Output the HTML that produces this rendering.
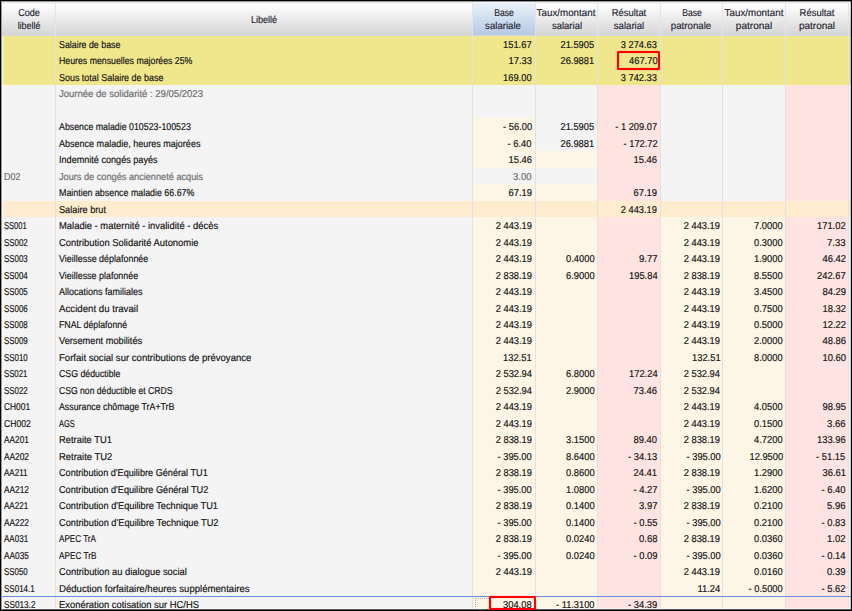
<!DOCTYPE html>
<html><head><meta charset="utf-8"><style>
*{margin:0;padding:0;box-sizing:border-box}
html,body{width:852px;height:611px;overflow:hidden;background:#000}
body{position:relative;text-rendering:geometricPrecision;font-family:"Liberation Sans",sans-serif;font-size:10px;color:#151515}
.a{position:absolute}
.t{position:absolute;white-space:pre;line-height:12px;transform-origin:0 0;-webkit-text-stroke:0.18px currentColor}
.n{position:absolute;white-space:pre;line-height:12px;transform-origin:100% 0;-webkit-text-stroke:0.18px currentColor}
.gt{color:#6e6e6e}
.ht{position:absolute;white-space:pre;line-height:12px;color:#1f2530;transform-origin:50% 0;-webkit-text-stroke:0.15px currentColor}
</style></head><body>

<div class="a" style="left:1px;top:1px;width:850px;height:608px;background:#f4f4f4"></div>
<div class="a" style="left:1px;top:1px;width:850px;height:35px;background:linear-gradient(#999 0px,#f0f0f0 1px,#ececec 2px,#fdfdfd 3.5px,#fbfbfb 6px,#d5d5d5 34px)"></div>
<div class="a" style="left:473px;top:2px;width:62px;height:33px;background:linear-gradient(#ecf3fb,#b5c9e3)"></div>
<div class="a" style="left:1px;top:35px;width:850px;height:1px;background:#d7d7e1"></div>
<div class="a" style="left:55px;top:3px;width:1px;height:32px;background:#e4e4e4"></div>
<div class="a" style="left:472px;top:3px;width:1px;height:32px;background:#e4e4e4"></div>
<div class="a" style="left:535px;top:3px;width:1px;height:32px;background:#e4e4e4"></div>
<div class="a" style="left:597px;top:3px;width:1px;height:32px;background:#e4e4e4"></div>
<div class="a" style="left:660px;top:3px;width:1px;height:32px;background:#e4e4e4"></div>
<div class="a" style="left:722px;top:3px;width:1px;height:32px;background:#e4e4e4"></div>
<div class="a" style="left:785px;top:3px;width:1px;height:32px;background:#e4e4e4"></div>
<div class="a" style="left:848px;top:3px;width:1px;height:32px;background:#e4e4e4"></div>
<div class="a" style="left:1px;top:36.00px;width:54px;height:16.47px;background:#f0e68c"></div>
<div class="a" style="left:56px;top:36.00px;width:416px;height:16.47px;background:#f0e68c"></div>
<div class="a" style="left:473px;top:36.00px;width:62px;height:16.47px;background:#f0e68c"></div>
<div class="a" style="left:536px;top:36.00px;width:61px;height:16.47px;background:#f0e68c"></div>
<div class="a" style="left:598px;top:36.00px;width:62px;height:16.47px;background:#f0e68c"></div>
<div class="a" style="left:661px;top:36.00px;width:61px;height:16.47px;background:#f0e68c"></div>
<div class="a" style="left:723px;top:36.00px;width:62px;height:16.47px;background:#f0e68c"></div>
<div class="a" style="left:786px;top:36.00px;width:62px;height:16.47px;background:#f0e68c"></div>
<div class="a" style="left:849px;top:36.00px;width:2px;height:16.47px;background:#f0e68c"></div>
<div class="a" style="left:55px;top:36.00px;width:1px;height:16.47px;background:#e2e2e2"></div>
<div class="a" style="left:472px;top:36.00px;width:1px;height:16.47px;background:#e2e2e2"></div>
<div class="a" style="left:535px;top:36.00px;width:1px;height:16.47px;background:#e2e2e2"></div>
<div class="a" style="left:597px;top:36.00px;width:1px;height:16.47px;background:#e2e2e2"></div>
<div class="a" style="left:660px;top:36.00px;width:1px;height:16.47px;background:#e2e2e2"></div>
<div class="a" style="left:722px;top:36.00px;width:1px;height:16.47px;background:#e2e2e2"></div>
<div class="a" style="left:785px;top:36.00px;width:1px;height:16.47px;background:#e2e2e2"></div>
<div class="a" style="left:848px;top:36.00px;width:1px;height:16.47px;background:#e2e2e2"></div>
<div class="a" style="left:1px;top:52.47px;width:54px;height:16.47px;background:#f0e68c"></div>
<div class="a" style="left:56px;top:52.47px;width:416px;height:16.47px;background:#f0e68c"></div>
<div class="a" style="left:473px;top:52.47px;width:62px;height:16.47px;background:#f0e68c"></div>
<div class="a" style="left:536px;top:52.47px;width:61px;height:16.47px;background:#f0e68c"></div>
<div class="a" style="left:598px;top:52.47px;width:62px;height:16.47px;background:#f0e68c"></div>
<div class="a" style="left:661px;top:52.47px;width:61px;height:16.47px;background:#f0e68c"></div>
<div class="a" style="left:723px;top:52.47px;width:62px;height:16.47px;background:#f0e68c"></div>
<div class="a" style="left:786px;top:52.47px;width:62px;height:16.47px;background:#f0e68c"></div>
<div class="a" style="left:849px;top:52.47px;width:2px;height:16.47px;background:#f0e68c"></div>
<div class="a" style="left:55px;top:52.47px;width:1px;height:16.47px;background:#e2e2e2"></div>
<div class="a" style="left:472px;top:52.47px;width:1px;height:16.47px;background:#e2e2e2"></div>
<div class="a" style="left:535px;top:52.47px;width:1px;height:16.47px;background:#e2e2e2"></div>
<div class="a" style="left:597px;top:52.47px;width:1px;height:16.47px;background:#e2e2e2"></div>
<div class="a" style="left:660px;top:52.47px;width:1px;height:16.47px;background:#e2e2e2"></div>
<div class="a" style="left:722px;top:52.47px;width:1px;height:16.47px;background:#e2e2e2"></div>
<div class="a" style="left:785px;top:52.47px;width:1px;height:16.47px;background:#e2e2e2"></div>
<div class="a" style="left:848px;top:52.47px;width:1px;height:16.47px;background:#e2e2e2"></div>
<div class="a" style="left:1px;top:68.94px;width:54px;height:16.47px;background:#f0e68c"></div>
<div class="a" style="left:56px;top:68.94px;width:416px;height:16.47px;background:#f0e68c"></div>
<div class="a" style="left:473px;top:68.94px;width:62px;height:16.47px;background:#f0e68c"></div>
<div class="a" style="left:536px;top:68.94px;width:61px;height:16.47px;background:#f0e68c"></div>
<div class="a" style="left:598px;top:68.94px;width:62px;height:16.47px;background:#f0e68c"></div>
<div class="a" style="left:661px;top:68.94px;width:61px;height:16.47px;background:#f0e68c"></div>
<div class="a" style="left:723px;top:68.94px;width:62px;height:16.47px;background:#f0e68c"></div>
<div class="a" style="left:786px;top:68.94px;width:62px;height:16.47px;background:#f0e68c"></div>
<div class="a" style="left:849px;top:68.94px;width:2px;height:16.47px;background:#f0e68c"></div>
<div class="a" style="left:55px;top:68.94px;width:1px;height:16.47px;background:#e2e2e2"></div>
<div class="a" style="left:472px;top:68.94px;width:1px;height:16.47px;background:#e2e2e2"></div>
<div class="a" style="left:535px;top:68.94px;width:1px;height:16.47px;background:#e2e2e2"></div>
<div class="a" style="left:597px;top:68.94px;width:1px;height:16.47px;background:#e2e2e2"></div>
<div class="a" style="left:660px;top:68.94px;width:1px;height:16.47px;background:#e2e2e2"></div>
<div class="a" style="left:722px;top:68.94px;width:1px;height:16.47px;background:#e2e2e2"></div>
<div class="a" style="left:785px;top:68.94px;width:1px;height:16.47px;background:#e2e2e2"></div>
<div class="a" style="left:848px;top:68.94px;width:1px;height:16.47px;background:#e2e2e2"></div>
<div class="a" style="left:1px;top:85.41px;width:54px;height:16.47px;background:#f4f4f4"></div>
<div class="a" style="left:56px;top:85.41px;width:416px;height:16.47px;background:#f4f4f4"></div>
<div class="a" style="left:473px;top:85.41px;width:62px;height:16.47px;background:#f4f4f4"></div>
<div class="a" style="left:536px;top:85.41px;width:61px;height:16.47px;background:#f4f4f4"></div>
<div class="a" style="left:598px;top:85.41px;width:62px;height:16.47px;background:#ffe4e1"></div>
<div class="a" style="left:661px;top:85.41px;width:61px;height:16.47px;background:#f4f4f4"></div>
<div class="a" style="left:723px;top:85.41px;width:62px;height:16.47px;background:#f4f4f4"></div>
<div class="a" style="left:786px;top:85.41px;width:62px;height:16.47px;background:#ffe4e1"></div>
<div class="a" style="left:849px;top:85.41px;width:2px;height:16.47px;background:#f4f4f4"></div>
<div class="a" style="left:55px;top:85.41px;width:1px;height:16.47px;background:#e2e2e2"></div>
<div class="a" style="left:472px;top:85.41px;width:1px;height:16.47px;background:#e2e2e2"></div>
<div class="a" style="left:535px;top:85.41px;width:1px;height:16.47px;background:#e2e2e2"></div>
<div class="a" style="left:597px;top:85.41px;width:1px;height:16.47px;background:#e2e2e2"></div>
<div class="a" style="left:660px;top:85.41px;width:1px;height:16.47px;background:#e2e2e2"></div>
<div class="a" style="left:722px;top:85.41px;width:1px;height:16.47px;background:#e2e2e2"></div>
<div class="a" style="left:785px;top:85.41px;width:1px;height:16.47px;background:#e2e2e2"></div>
<div class="a" style="left:848px;top:85.41px;width:1px;height:16.47px;background:#e2e2e2"></div>
<div class="a" style="left:1px;top:101.88px;width:54px;height:16.47px;background:#f4f4f4"></div>
<div class="a" style="left:56px;top:101.88px;width:416px;height:16.47px;background:#f4f4f4"></div>
<div class="a" style="left:473px;top:101.88px;width:62px;height:16.47px;background:#f4f4f4"></div>
<div class="a" style="left:536px;top:101.88px;width:61px;height:16.47px;background:#f4f4f4"></div>
<div class="a" style="left:598px;top:101.88px;width:62px;height:16.47px;background:#ffe4e1"></div>
<div class="a" style="left:661px;top:101.88px;width:61px;height:16.47px;background:#f4f4f4"></div>
<div class="a" style="left:723px;top:101.88px;width:62px;height:16.47px;background:#f4f4f4"></div>
<div class="a" style="left:786px;top:101.88px;width:62px;height:16.47px;background:#ffe4e1"></div>
<div class="a" style="left:849px;top:101.88px;width:2px;height:16.47px;background:#f4f4f4"></div>
<div class="a" style="left:55px;top:101.88px;width:1px;height:16.47px;background:#e2e2e2"></div>
<div class="a" style="left:472px;top:101.88px;width:1px;height:16.47px;background:#e2e2e2"></div>
<div class="a" style="left:535px;top:101.88px;width:1px;height:16.47px;background:#e2e2e2"></div>
<div class="a" style="left:597px;top:101.88px;width:1px;height:16.47px;background:#e2e2e2"></div>
<div class="a" style="left:660px;top:101.88px;width:1px;height:16.47px;background:#e2e2e2"></div>
<div class="a" style="left:722px;top:101.88px;width:1px;height:16.47px;background:#e2e2e2"></div>
<div class="a" style="left:785px;top:101.88px;width:1px;height:16.47px;background:#e2e2e2"></div>
<div class="a" style="left:848px;top:101.88px;width:1px;height:16.47px;background:#e2e2e2"></div>
<div class="a" style="left:1px;top:118.35px;width:54px;height:16.47px;background:#f4f4f4"></div>
<div class="a" style="left:56px;top:118.35px;width:416px;height:16.47px;background:#f4f4f4"></div>
<div class="a" style="left:473px;top:118.35px;width:62px;height:16.47px;background:#fdf5e6"></div>
<div class="a" style="left:536px;top:118.35px;width:61px;height:16.47px;background:#f4f4f4"></div>
<div class="a" style="left:598px;top:118.35px;width:62px;height:16.47px;background:#ffe4e1"></div>
<div class="a" style="left:661px;top:118.35px;width:61px;height:16.47px;background:#f4f4f4"></div>
<div class="a" style="left:723px;top:118.35px;width:62px;height:16.47px;background:#f4f4f4"></div>
<div class="a" style="left:786px;top:118.35px;width:62px;height:16.47px;background:#ffe4e1"></div>
<div class="a" style="left:849px;top:118.35px;width:2px;height:16.47px;background:#f4f4f4"></div>
<div class="a" style="left:55px;top:118.35px;width:1px;height:16.47px;background:#e2e2e2"></div>
<div class="a" style="left:472px;top:118.35px;width:1px;height:16.47px;background:#e2e2e2"></div>
<div class="a" style="left:535px;top:118.35px;width:1px;height:16.47px;background:#e2e2e2"></div>
<div class="a" style="left:597px;top:118.35px;width:1px;height:16.47px;background:#e2e2e2"></div>
<div class="a" style="left:660px;top:118.35px;width:1px;height:16.47px;background:#e2e2e2"></div>
<div class="a" style="left:722px;top:118.35px;width:1px;height:16.47px;background:#e2e2e2"></div>
<div class="a" style="left:785px;top:118.35px;width:1px;height:16.47px;background:#e2e2e2"></div>
<div class="a" style="left:848px;top:118.35px;width:1px;height:16.47px;background:#e2e2e2"></div>
<div class="a" style="left:1px;top:134.82px;width:54px;height:16.47px;background:#f4f4f4"></div>
<div class="a" style="left:56px;top:134.82px;width:416px;height:16.47px;background:#f4f4f4"></div>
<div class="a" style="left:473px;top:134.82px;width:62px;height:16.47px;background:#fdf5e6"></div>
<div class="a" style="left:536px;top:134.82px;width:61px;height:16.47px;background:#f4f4f4"></div>
<div class="a" style="left:598px;top:134.82px;width:62px;height:16.47px;background:#ffe4e1"></div>
<div class="a" style="left:661px;top:134.82px;width:61px;height:16.47px;background:#f4f4f4"></div>
<div class="a" style="left:723px;top:134.82px;width:62px;height:16.47px;background:#f4f4f4"></div>
<div class="a" style="left:786px;top:134.82px;width:62px;height:16.47px;background:#ffe4e1"></div>
<div class="a" style="left:849px;top:134.82px;width:2px;height:16.47px;background:#f4f4f4"></div>
<div class="a" style="left:55px;top:134.82px;width:1px;height:16.47px;background:#e2e2e2"></div>
<div class="a" style="left:472px;top:134.82px;width:1px;height:16.47px;background:#e2e2e2"></div>
<div class="a" style="left:535px;top:134.82px;width:1px;height:16.47px;background:#e2e2e2"></div>
<div class="a" style="left:597px;top:134.82px;width:1px;height:16.47px;background:#e2e2e2"></div>
<div class="a" style="left:660px;top:134.82px;width:1px;height:16.47px;background:#e2e2e2"></div>
<div class="a" style="left:722px;top:134.82px;width:1px;height:16.47px;background:#e2e2e2"></div>
<div class="a" style="left:785px;top:134.82px;width:1px;height:16.47px;background:#e2e2e2"></div>
<div class="a" style="left:848px;top:134.82px;width:1px;height:16.47px;background:#e2e2e2"></div>
<div class="a" style="left:1px;top:151.29px;width:54px;height:16.47px;background:#f4f4f4"></div>
<div class="a" style="left:56px;top:151.29px;width:416px;height:16.47px;background:#f4f4f4"></div>
<div class="a" style="left:473px;top:151.29px;width:62px;height:16.47px;background:#fdf5e6"></div>
<div class="a" style="left:536px;top:151.29px;width:61px;height:16.47px;background:#fdf5e6"></div>
<div class="a" style="left:598px;top:151.29px;width:62px;height:16.47px;background:#ffe4e1"></div>
<div class="a" style="left:661px;top:151.29px;width:61px;height:16.47px;background:#f4f4f4"></div>
<div class="a" style="left:723px;top:151.29px;width:62px;height:16.47px;background:#f4f4f4"></div>
<div class="a" style="left:786px;top:151.29px;width:62px;height:16.47px;background:#ffe4e1"></div>
<div class="a" style="left:849px;top:151.29px;width:2px;height:16.47px;background:#f4f4f4"></div>
<div class="a" style="left:55px;top:151.29px;width:1px;height:16.47px;background:#e2e2e2"></div>
<div class="a" style="left:472px;top:151.29px;width:1px;height:16.47px;background:#e2e2e2"></div>
<div class="a" style="left:535px;top:151.29px;width:1px;height:16.47px;background:#e2e2e2"></div>
<div class="a" style="left:597px;top:151.29px;width:1px;height:16.47px;background:#e2e2e2"></div>
<div class="a" style="left:660px;top:151.29px;width:1px;height:16.47px;background:#e2e2e2"></div>
<div class="a" style="left:722px;top:151.29px;width:1px;height:16.47px;background:#e2e2e2"></div>
<div class="a" style="left:785px;top:151.29px;width:1px;height:16.47px;background:#e2e2e2"></div>
<div class="a" style="left:848px;top:151.29px;width:1px;height:16.47px;background:#e2e2e2"></div>
<div class="a" style="left:1px;top:167.76px;width:54px;height:16.47px;background:#f4f4f4"></div>
<div class="a" style="left:56px;top:167.76px;width:416px;height:16.47px;background:#f4f4f4"></div>
<div class="a" style="left:473px;top:167.76px;width:62px;height:16.47px;background:#f4f4f4"></div>
<div class="a" style="left:536px;top:167.76px;width:61px;height:16.47px;background:#f4f4f4"></div>
<div class="a" style="left:598px;top:167.76px;width:62px;height:16.47px;background:#ffe4e1"></div>
<div class="a" style="left:661px;top:167.76px;width:61px;height:16.47px;background:#f4f4f4"></div>
<div class="a" style="left:723px;top:167.76px;width:62px;height:16.47px;background:#f4f4f4"></div>
<div class="a" style="left:786px;top:167.76px;width:62px;height:16.47px;background:#ffe4e1"></div>
<div class="a" style="left:849px;top:167.76px;width:2px;height:16.47px;background:#f4f4f4"></div>
<div class="a" style="left:55px;top:167.76px;width:1px;height:16.47px;background:#e2e2e2"></div>
<div class="a" style="left:472px;top:167.76px;width:1px;height:16.47px;background:#e2e2e2"></div>
<div class="a" style="left:535px;top:167.76px;width:1px;height:16.47px;background:#e2e2e2"></div>
<div class="a" style="left:597px;top:167.76px;width:1px;height:16.47px;background:#e2e2e2"></div>
<div class="a" style="left:660px;top:167.76px;width:1px;height:16.47px;background:#e2e2e2"></div>
<div class="a" style="left:722px;top:167.76px;width:1px;height:16.47px;background:#e2e2e2"></div>
<div class="a" style="left:785px;top:167.76px;width:1px;height:16.47px;background:#e2e2e2"></div>
<div class="a" style="left:848px;top:167.76px;width:1px;height:16.47px;background:#e2e2e2"></div>
<div class="a" style="left:1px;top:184.23px;width:54px;height:16.47px;background:#f4f4f4"></div>
<div class="a" style="left:56px;top:184.23px;width:416px;height:16.47px;background:#f4f4f4"></div>
<div class="a" style="left:473px;top:184.23px;width:62px;height:16.47px;background:#fdf5e6"></div>
<div class="a" style="left:536px;top:184.23px;width:61px;height:16.47px;background:#fdf5e6"></div>
<div class="a" style="left:598px;top:184.23px;width:62px;height:16.47px;background:#ffe4e1"></div>
<div class="a" style="left:661px;top:184.23px;width:61px;height:16.47px;background:#f4f4f4"></div>
<div class="a" style="left:723px;top:184.23px;width:62px;height:16.47px;background:#f4f4f4"></div>
<div class="a" style="left:786px;top:184.23px;width:62px;height:16.47px;background:#ffe4e1"></div>
<div class="a" style="left:849px;top:184.23px;width:2px;height:16.47px;background:#f4f4f4"></div>
<div class="a" style="left:55px;top:184.23px;width:1px;height:16.47px;background:#e2e2e2"></div>
<div class="a" style="left:472px;top:184.23px;width:1px;height:16.47px;background:#e2e2e2"></div>
<div class="a" style="left:535px;top:184.23px;width:1px;height:16.47px;background:#e2e2e2"></div>
<div class="a" style="left:597px;top:184.23px;width:1px;height:16.47px;background:#e2e2e2"></div>
<div class="a" style="left:660px;top:184.23px;width:1px;height:16.47px;background:#e2e2e2"></div>
<div class="a" style="left:722px;top:184.23px;width:1px;height:16.47px;background:#e2e2e2"></div>
<div class="a" style="left:785px;top:184.23px;width:1px;height:16.47px;background:#e2e2e2"></div>
<div class="a" style="left:848px;top:184.23px;width:1px;height:16.47px;background:#e2e2e2"></div>
<div class="a" style="left:1px;top:200.70px;width:54px;height:16.47px;background:#ffebcd"></div>
<div class="a" style="left:56px;top:200.70px;width:416px;height:16.47px;background:#ffebcd"></div>
<div class="a" style="left:473px;top:200.70px;width:62px;height:16.47px;background:#ffebcd"></div>
<div class="a" style="left:536px;top:200.70px;width:61px;height:16.47px;background:#ffebcd"></div>
<div class="a" style="left:598px;top:200.70px;width:62px;height:16.47px;background:#ffebcd"></div>
<div class="a" style="left:661px;top:200.70px;width:61px;height:16.47px;background:#ffebcd"></div>
<div class="a" style="left:723px;top:200.70px;width:62px;height:16.47px;background:#ffebcd"></div>
<div class="a" style="left:786px;top:200.70px;width:62px;height:16.47px;background:#ffebcd"></div>
<div class="a" style="left:849px;top:200.70px;width:2px;height:16.47px;background:#ffebcd"></div>
<div class="a" style="left:55px;top:200.70px;width:1px;height:16.47px;background:#e2e2e2"></div>
<div class="a" style="left:472px;top:200.70px;width:1px;height:16.47px;background:#e2e2e2"></div>
<div class="a" style="left:535px;top:200.70px;width:1px;height:16.47px;background:#e2e2e2"></div>
<div class="a" style="left:597px;top:200.70px;width:1px;height:16.47px;background:#e2e2e2"></div>
<div class="a" style="left:660px;top:200.70px;width:1px;height:16.47px;background:#e2e2e2"></div>
<div class="a" style="left:722px;top:200.70px;width:1px;height:16.47px;background:#e2e2e2"></div>
<div class="a" style="left:785px;top:200.70px;width:1px;height:16.47px;background:#e2e2e2"></div>
<div class="a" style="left:848px;top:200.70px;width:1px;height:16.47px;background:#e2e2e2"></div>
<div class="a" style="left:1px;top:217.17px;width:54px;height:16.47px;background:#f4f4f4"></div>
<div class="a" style="left:56px;top:217.17px;width:416px;height:16.47px;background:#f4f4f4"></div>
<div class="a" style="left:473px;top:217.17px;width:62px;height:16.47px;background:#fdf5e6"></div>
<div class="a" style="left:536px;top:217.17px;width:61px;height:16.47px;background:#fdf5e6"></div>
<div class="a" style="left:598px;top:217.17px;width:62px;height:16.47px;background:#ffe4e1"></div>
<div class="a" style="left:661px;top:217.17px;width:61px;height:16.47px;background:#fdf5e6"></div>
<div class="a" style="left:723px;top:217.17px;width:62px;height:16.47px;background:#fdf5e6"></div>
<div class="a" style="left:786px;top:217.17px;width:62px;height:16.47px;background:#ffe4e1"></div>
<div class="a" style="left:849px;top:217.17px;width:2px;height:16.47px;background:#f4f4f4"></div>
<div class="a" style="left:55px;top:217.17px;width:1px;height:16.47px;background:#e2e2e2"></div>
<div class="a" style="left:472px;top:217.17px;width:1px;height:16.47px;background:#e2e2e2"></div>
<div class="a" style="left:535px;top:217.17px;width:1px;height:16.47px;background:#e2e2e2"></div>
<div class="a" style="left:597px;top:217.17px;width:1px;height:16.47px;background:#e2e2e2"></div>
<div class="a" style="left:660px;top:217.17px;width:1px;height:16.47px;background:#e2e2e2"></div>
<div class="a" style="left:722px;top:217.17px;width:1px;height:16.47px;background:#e2e2e2"></div>
<div class="a" style="left:785px;top:217.17px;width:1px;height:16.47px;background:#e2e2e2"></div>
<div class="a" style="left:848px;top:217.17px;width:1px;height:16.47px;background:#e2e2e2"></div>
<div class="a" style="left:1px;top:233.64px;width:54px;height:16.47px;background:#f4f4f4"></div>
<div class="a" style="left:56px;top:233.64px;width:416px;height:16.47px;background:#f4f4f4"></div>
<div class="a" style="left:473px;top:233.64px;width:62px;height:16.47px;background:#fdf5e6"></div>
<div class="a" style="left:536px;top:233.64px;width:61px;height:16.47px;background:#fdf5e6"></div>
<div class="a" style="left:598px;top:233.64px;width:62px;height:16.47px;background:#ffe4e1"></div>
<div class="a" style="left:661px;top:233.64px;width:61px;height:16.47px;background:#fdf5e6"></div>
<div class="a" style="left:723px;top:233.64px;width:62px;height:16.47px;background:#fdf5e6"></div>
<div class="a" style="left:786px;top:233.64px;width:62px;height:16.47px;background:#ffe4e1"></div>
<div class="a" style="left:849px;top:233.64px;width:2px;height:16.47px;background:#f4f4f4"></div>
<div class="a" style="left:55px;top:233.64px;width:1px;height:16.47px;background:#e2e2e2"></div>
<div class="a" style="left:472px;top:233.64px;width:1px;height:16.47px;background:#e2e2e2"></div>
<div class="a" style="left:535px;top:233.64px;width:1px;height:16.47px;background:#e2e2e2"></div>
<div class="a" style="left:597px;top:233.64px;width:1px;height:16.47px;background:#e2e2e2"></div>
<div class="a" style="left:660px;top:233.64px;width:1px;height:16.47px;background:#e2e2e2"></div>
<div class="a" style="left:722px;top:233.64px;width:1px;height:16.47px;background:#e2e2e2"></div>
<div class="a" style="left:785px;top:233.64px;width:1px;height:16.47px;background:#e2e2e2"></div>
<div class="a" style="left:848px;top:233.64px;width:1px;height:16.47px;background:#e2e2e2"></div>
<div class="a" style="left:1px;top:250.11px;width:54px;height:16.47px;background:#f4f4f4"></div>
<div class="a" style="left:56px;top:250.11px;width:416px;height:16.47px;background:#f4f4f4"></div>
<div class="a" style="left:473px;top:250.11px;width:62px;height:16.47px;background:#fdf5e6"></div>
<div class="a" style="left:536px;top:250.11px;width:61px;height:16.47px;background:#fdf5e6"></div>
<div class="a" style="left:598px;top:250.11px;width:62px;height:16.47px;background:#ffe4e1"></div>
<div class="a" style="left:661px;top:250.11px;width:61px;height:16.47px;background:#fdf5e6"></div>
<div class="a" style="left:723px;top:250.11px;width:62px;height:16.47px;background:#fdf5e6"></div>
<div class="a" style="left:786px;top:250.11px;width:62px;height:16.47px;background:#ffe4e1"></div>
<div class="a" style="left:849px;top:250.11px;width:2px;height:16.47px;background:#f4f4f4"></div>
<div class="a" style="left:55px;top:250.11px;width:1px;height:16.47px;background:#e2e2e2"></div>
<div class="a" style="left:472px;top:250.11px;width:1px;height:16.47px;background:#e2e2e2"></div>
<div class="a" style="left:535px;top:250.11px;width:1px;height:16.47px;background:#e2e2e2"></div>
<div class="a" style="left:597px;top:250.11px;width:1px;height:16.47px;background:#e2e2e2"></div>
<div class="a" style="left:660px;top:250.11px;width:1px;height:16.47px;background:#e2e2e2"></div>
<div class="a" style="left:722px;top:250.11px;width:1px;height:16.47px;background:#e2e2e2"></div>
<div class="a" style="left:785px;top:250.11px;width:1px;height:16.47px;background:#e2e2e2"></div>
<div class="a" style="left:848px;top:250.11px;width:1px;height:16.47px;background:#e2e2e2"></div>
<div class="a" style="left:1px;top:266.58px;width:54px;height:16.47px;background:#f4f4f4"></div>
<div class="a" style="left:56px;top:266.58px;width:416px;height:16.47px;background:#f4f4f4"></div>
<div class="a" style="left:473px;top:266.58px;width:62px;height:16.47px;background:#fdf5e6"></div>
<div class="a" style="left:536px;top:266.58px;width:61px;height:16.47px;background:#fdf5e6"></div>
<div class="a" style="left:598px;top:266.58px;width:62px;height:16.47px;background:#ffe4e1"></div>
<div class="a" style="left:661px;top:266.58px;width:61px;height:16.47px;background:#fdf5e6"></div>
<div class="a" style="left:723px;top:266.58px;width:62px;height:16.47px;background:#fdf5e6"></div>
<div class="a" style="left:786px;top:266.58px;width:62px;height:16.47px;background:#ffe4e1"></div>
<div class="a" style="left:849px;top:266.58px;width:2px;height:16.47px;background:#f4f4f4"></div>
<div class="a" style="left:55px;top:266.58px;width:1px;height:16.47px;background:#e2e2e2"></div>
<div class="a" style="left:472px;top:266.58px;width:1px;height:16.47px;background:#e2e2e2"></div>
<div class="a" style="left:535px;top:266.58px;width:1px;height:16.47px;background:#e2e2e2"></div>
<div class="a" style="left:597px;top:266.58px;width:1px;height:16.47px;background:#e2e2e2"></div>
<div class="a" style="left:660px;top:266.58px;width:1px;height:16.47px;background:#e2e2e2"></div>
<div class="a" style="left:722px;top:266.58px;width:1px;height:16.47px;background:#e2e2e2"></div>
<div class="a" style="left:785px;top:266.58px;width:1px;height:16.47px;background:#e2e2e2"></div>
<div class="a" style="left:848px;top:266.58px;width:1px;height:16.47px;background:#e2e2e2"></div>
<div class="a" style="left:1px;top:283.05px;width:54px;height:16.47px;background:#f4f4f4"></div>
<div class="a" style="left:56px;top:283.05px;width:416px;height:16.47px;background:#f4f4f4"></div>
<div class="a" style="left:473px;top:283.05px;width:62px;height:16.47px;background:#fdf5e6"></div>
<div class="a" style="left:536px;top:283.05px;width:61px;height:16.47px;background:#fdf5e6"></div>
<div class="a" style="left:598px;top:283.05px;width:62px;height:16.47px;background:#ffe4e1"></div>
<div class="a" style="left:661px;top:283.05px;width:61px;height:16.47px;background:#fdf5e6"></div>
<div class="a" style="left:723px;top:283.05px;width:62px;height:16.47px;background:#fdf5e6"></div>
<div class="a" style="left:786px;top:283.05px;width:62px;height:16.47px;background:#ffe4e1"></div>
<div class="a" style="left:849px;top:283.05px;width:2px;height:16.47px;background:#f4f4f4"></div>
<div class="a" style="left:55px;top:283.05px;width:1px;height:16.47px;background:#e2e2e2"></div>
<div class="a" style="left:472px;top:283.05px;width:1px;height:16.47px;background:#e2e2e2"></div>
<div class="a" style="left:535px;top:283.05px;width:1px;height:16.47px;background:#e2e2e2"></div>
<div class="a" style="left:597px;top:283.05px;width:1px;height:16.47px;background:#e2e2e2"></div>
<div class="a" style="left:660px;top:283.05px;width:1px;height:16.47px;background:#e2e2e2"></div>
<div class="a" style="left:722px;top:283.05px;width:1px;height:16.47px;background:#e2e2e2"></div>
<div class="a" style="left:785px;top:283.05px;width:1px;height:16.47px;background:#e2e2e2"></div>
<div class="a" style="left:848px;top:283.05px;width:1px;height:16.47px;background:#e2e2e2"></div>
<div class="a" style="left:1px;top:299.52px;width:54px;height:16.47px;background:#f4f4f4"></div>
<div class="a" style="left:56px;top:299.52px;width:416px;height:16.47px;background:#f4f4f4"></div>
<div class="a" style="left:473px;top:299.52px;width:62px;height:16.47px;background:#fdf5e6"></div>
<div class="a" style="left:536px;top:299.52px;width:61px;height:16.47px;background:#fdf5e6"></div>
<div class="a" style="left:598px;top:299.52px;width:62px;height:16.47px;background:#ffe4e1"></div>
<div class="a" style="left:661px;top:299.52px;width:61px;height:16.47px;background:#fdf5e6"></div>
<div class="a" style="left:723px;top:299.52px;width:62px;height:16.47px;background:#fdf5e6"></div>
<div class="a" style="left:786px;top:299.52px;width:62px;height:16.47px;background:#ffe4e1"></div>
<div class="a" style="left:849px;top:299.52px;width:2px;height:16.47px;background:#f4f4f4"></div>
<div class="a" style="left:55px;top:299.52px;width:1px;height:16.47px;background:#e2e2e2"></div>
<div class="a" style="left:472px;top:299.52px;width:1px;height:16.47px;background:#e2e2e2"></div>
<div class="a" style="left:535px;top:299.52px;width:1px;height:16.47px;background:#e2e2e2"></div>
<div class="a" style="left:597px;top:299.52px;width:1px;height:16.47px;background:#e2e2e2"></div>
<div class="a" style="left:660px;top:299.52px;width:1px;height:16.47px;background:#e2e2e2"></div>
<div class="a" style="left:722px;top:299.52px;width:1px;height:16.47px;background:#e2e2e2"></div>
<div class="a" style="left:785px;top:299.52px;width:1px;height:16.47px;background:#e2e2e2"></div>
<div class="a" style="left:848px;top:299.52px;width:1px;height:16.47px;background:#e2e2e2"></div>
<div class="a" style="left:1px;top:315.99px;width:54px;height:16.47px;background:#f4f4f4"></div>
<div class="a" style="left:56px;top:315.99px;width:416px;height:16.47px;background:#f4f4f4"></div>
<div class="a" style="left:473px;top:315.99px;width:62px;height:16.47px;background:#fdf5e6"></div>
<div class="a" style="left:536px;top:315.99px;width:61px;height:16.47px;background:#fdf5e6"></div>
<div class="a" style="left:598px;top:315.99px;width:62px;height:16.47px;background:#ffe4e1"></div>
<div class="a" style="left:661px;top:315.99px;width:61px;height:16.47px;background:#fdf5e6"></div>
<div class="a" style="left:723px;top:315.99px;width:62px;height:16.47px;background:#fdf5e6"></div>
<div class="a" style="left:786px;top:315.99px;width:62px;height:16.47px;background:#ffe4e1"></div>
<div class="a" style="left:849px;top:315.99px;width:2px;height:16.47px;background:#f4f4f4"></div>
<div class="a" style="left:55px;top:315.99px;width:1px;height:16.47px;background:#e2e2e2"></div>
<div class="a" style="left:472px;top:315.99px;width:1px;height:16.47px;background:#e2e2e2"></div>
<div class="a" style="left:535px;top:315.99px;width:1px;height:16.47px;background:#e2e2e2"></div>
<div class="a" style="left:597px;top:315.99px;width:1px;height:16.47px;background:#e2e2e2"></div>
<div class="a" style="left:660px;top:315.99px;width:1px;height:16.47px;background:#e2e2e2"></div>
<div class="a" style="left:722px;top:315.99px;width:1px;height:16.47px;background:#e2e2e2"></div>
<div class="a" style="left:785px;top:315.99px;width:1px;height:16.47px;background:#e2e2e2"></div>
<div class="a" style="left:848px;top:315.99px;width:1px;height:16.47px;background:#e2e2e2"></div>
<div class="a" style="left:1px;top:332.46px;width:54px;height:16.47px;background:#f4f4f4"></div>
<div class="a" style="left:56px;top:332.46px;width:416px;height:16.47px;background:#f4f4f4"></div>
<div class="a" style="left:473px;top:332.46px;width:62px;height:16.47px;background:#fdf5e6"></div>
<div class="a" style="left:536px;top:332.46px;width:61px;height:16.47px;background:#fdf5e6"></div>
<div class="a" style="left:598px;top:332.46px;width:62px;height:16.47px;background:#ffe4e1"></div>
<div class="a" style="left:661px;top:332.46px;width:61px;height:16.47px;background:#fdf5e6"></div>
<div class="a" style="left:723px;top:332.46px;width:62px;height:16.47px;background:#fdf5e6"></div>
<div class="a" style="left:786px;top:332.46px;width:62px;height:16.47px;background:#ffe4e1"></div>
<div class="a" style="left:849px;top:332.46px;width:2px;height:16.47px;background:#f4f4f4"></div>
<div class="a" style="left:55px;top:332.46px;width:1px;height:16.47px;background:#e2e2e2"></div>
<div class="a" style="left:472px;top:332.46px;width:1px;height:16.47px;background:#e2e2e2"></div>
<div class="a" style="left:535px;top:332.46px;width:1px;height:16.47px;background:#e2e2e2"></div>
<div class="a" style="left:597px;top:332.46px;width:1px;height:16.47px;background:#e2e2e2"></div>
<div class="a" style="left:660px;top:332.46px;width:1px;height:16.47px;background:#e2e2e2"></div>
<div class="a" style="left:722px;top:332.46px;width:1px;height:16.47px;background:#e2e2e2"></div>
<div class="a" style="left:785px;top:332.46px;width:1px;height:16.47px;background:#e2e2e2"></div>
<div class="a" style="left:848px;top:332.46px;width:1px;height:16.47px;background:#e2e2e2"></div>
<div class="a" style="left:1px;top:348.93px;width:54px;height:16.47px;background:#f4f4f4"></div>
<div class="a" style="left:56px;top:348.93px;width:416px;height:16.47px;background:#f4f4f4"></div>
<div class="a" style="left:473px;top:348.93px;width:62px;height:16.47px;background:#fdf5e6"></div>
<div class="a" style="left:536px;top:348.93px;width:61px;height:16.47px;background:#fdf5e6"></div>
<div class="a" style="left:598px;top:348.93px;width:62px;height:16.47px;background:#ffe4e1"></div>
<div class="a" style="left:661px;top:348.93px;width:61px;height:16.47px;background:#fdf5e6"></div>
<div class="a" style="left:723px;top:348.93px;width:62px;height:16.47px;background:#fdf5e6"></div>
<div class="a" style="left:786px;top:348.93px;width:62px;height:16.47px;background:#ffe4e1"></div>
<div class="a" style="left:849px;top:348.93px;width:2px;height:16.47px;background:#f4f4f4"></div>
<div class="a" style="left:55px;top:348.93px;width:1px;height:16.47px;background:#e2e2e2"></div>
<div class="a" style="left:472px;top:348.93px;width:1px;height:16.47px;background:#e2e2e2"></div>
<div class="a" style="left:535px;top:348.93px;width:1px;height:16.47px;background:#e2e2e2"></div>
<div class="a" style="left:597px;top:348.93px;width:1px;height:16.47px;background:#e2e2e2"></div>
<div class="a" style="left:660px;top:348.93px;width:1px;height:16.47px;background:#e2e2e2"></div>
<div class="a" style="left:722px;top:348.93px;width:1px;height:16.47px;background:#e2e2e2"></div>
<div class="a" style="left:785px;top:348.93px;width:1px;height:16.47px;background:#e2e2e2"></div>
<div class="a" style="left:848px;top:348.93px;width:1px;height:16.47px;background:#e2e2e2"></div>
<div class="a" style="left:1px;top:365.40px;width:54px;height:16.47px;background:#f4f4f4"></div>
<div class="a" style="left:56px;top:365.40px;width:416px;height:16.47px;background:#f4f4f4"></div>
<div class="a" style="left:473px;top:365.40px;width:62px;height:16.47px;background:#fdf5e6"></div>
<div class="a" style="left:536px;top:365.40px;width:61px;height:16.47px;background:#fdf5e6"></div>
<div class="a" style="left:598px;top:365.40px;width:62px;height:16.47px;background:#ffe4e1"></div>
<div class="a" style="left:661px;top:365.40px;width:61px;height:16.47px;background:#fdf5e6"></div>
<div class="a" style="left:723px;top:365.40px;width:62px;height:16.47px;background:#fdf5e6"></div>
<div class="a" style="left:786px;top:365.40px;width:62px;height:16.47px;background:#ffe4e1"></div>
<div class="a" style="left:849px;top:365.40px;width:2px;height:16.47px;background:#f4f4f4"></div>
<div class="a" style="left:55px;top:365.40px;width:1px;height:16.47px;background:#e2e2e2"></div>
<div class="a" style="left:472px;top:365.40px;width:1px;height:16.47px;background:#e2e2e2"></div>
<div class="a" style="left:535px;top:365.40px;width:1px;height:16.47px;background:#e2e2e2"></div>
<div class="a" style="left:597px;top:365.40px;width:1px;height:16.47px;background:#e2e2e2"></div>
<div class="a" style="left:660px;top:365.40px;width:1px;height:16.47px;background:#e2e2e2"></div>
<div class="a" style="left:722px;top:365.40px;width:1px;height:16.47px;background:#e2e2e2"></div>
<div class="a" style="left:785px;top:365.40px;width:1px;height:16.47px;background:#e2e2e2"></div>
<div class="a" style="left:848px;top:365.40px;width:1px;height:16.47px;background:#e2e2e2"></div>
<div class="a" style="left:1px;top:381.87px;width:54px;height:16.47px;background:#f4f4f4"></div>
<div class="a" style="left:56px;top:381.87px;width:416px;height:16.47px;background:#f4f4f4"></div>
<div class="a" style="left:473px;top:381.87px;width:62px;height:16.47px;background:#fdf5e6"></div>
<div class="a" style="left:536px;top:381.87px;width:61px;height:16.47px;background:#fdf5e6"></div>
<div class="a" style="left:598px;top:381.87px;width:62px;height:16.47px;background:#ffe4e1"></div>
<div class="a" style="left:661px;top:381.87px;width:61px;height:16.47px;background:#fdf5e6"></div>
<div class="a" style="left:723px;top:381.87px;width:62px;height:16.47px;background:#fdf5e6"></div>
<div class="a" style="left:786px;top:381.87px;width:62px;height:16.47px;background:#ffe4e1"></div>
<div class="a" style="left:849px;top:381.87px;width:2px;height:16.47px;background:#f4f4f4"></div>
<div class="a" style="left:55px;top:381.87px;width:1px;height:16.47px;background:#e2e2e2"></div>
<div class="a" style="left:472px;top:381.87px;width:1px;height:16.47px;background:#e2e2e2"></div>
<div class="a" style="left:535px;top:381.87px;width:1px;height:16.47px;background:#e2e2e2"></div>
<div class="a" style="left:597px;top:381.87px;width:1px;height:16.47px;background:#e2e2e2"></div>
<div class="a" style="left:660px;top:381.87px;width:1px;height:16.47px;background:#e2e2e2"></div>
<div class="a" style="left:722px;top:381.87px;width:1px;height:16.47px;background:#e2e2e2"></div>
<div class="a" style="left:785px;top:381.87px;width:1px;height:16.47px;background:#e2e2e2"></div>
<div class="a" style="left:848px;top:381.87px;width:1px;height:16.47px;background:#e2e2e2"></div>
<div class="a" style="left:1px;top:398.34px;width:54px;height:16.47px;background:#f4f4f4"></div>
<div class="a" style="left:56px;top:398.34px;width:416px;height:16.47px;background:#f4f4f4"></div>
<div class="a" style="left:473px;top:398.34px;width:62px;height:16.47px;background:#fdf5e6"></div>
<div class="a" style="left:536px;top:398.34px;width:61px;height:16.47px;background:#fdf5e6"></div>
<div class="a" style="left:598px;top:398.34px;width:62px;height:16.47px;background:#ffe4e1"></div>
<div class="a" style="left:661px;top:398.34px;width:61px;height:16.47px;background:#fdf5e6"></div>
<div class="a" style="left:723px;top:398.34px;width:62px;height:16.47px;background:#fdf5e6"></div>
<div class="a" style="left:786px;top:398.34px;width:62px;height:16.47px;background:#ffe4e1"></div>
<div class="a" style="left:849px;top:398.34px;width:2px;height:16.47px;background:#f4f4f4"></div>
<div class="a" style="left:55px;top:398.34px;width:1px;height:16.47px;background:#e2e2e2"></div>
<div class="a" style="left:472px;top:398.34px;width:1px;height:16.47px;background:#e2e2e2"></div>
<div class="a" style="left:535px;top:398.34px;width:1px;height:16.47px;background:#e2e2e2"></div>
<div class="a" style="left:597px;top:398.34px;width:1px;height:16.47px;background:#e2e2e2"></div>
<div class="a" style="left:660px;top:398.34px;width:1px;height:16.47px;background:#e2e2e2"></div>
<div class="a" style="left:722px;top:398.34px;width:1px;height:16.47px;background:#e2e2e2"></div>
<div class="a" style="left:785px;top:398.34px;width:1px;height:16.47px;background:#e2e2e2"></div>
<div class="a" style="left:848px;top:398.34px;width:1px;height:16.47px;background:#e2e2e2"></div>
<div class="a" style="left:1px;top:414.81px;width:54px;height:16.47px;background:#f4f4f4"></div>
<div class="a" style="left:56px;top:414.81px;width:416px;height:16.47px;background:#f4f4f4"></div>
<div class="a" style="left:473px;top:414.81px;width:62px;height:16.47px;background:#fdf5e6"></div>
<div class="a" style="left:536px;top:414.81px;width:61px;height:16.47px;background:#fdf5e6"></div>
<div class="a" style="left:598px;top:414.81px;width:62px;height:16.47px;background:#ffe4e1"></div>
<div class="a" style="left:661px;top:414.81px;width:61px;height:16.47px;background:#fdf5e6"></div>
<div class="a" style="left:723px;top:414.81px;width:62px;height:16.47px;background:#fdf5e6"></div>
<div class="a" style="left:786px;top:414.81px;width:62px;height:16.47px;background:#ffe4e1"></div>
<div class="a" style="left:849px;top:414.81px;width:2px;height:16.47px;background:#f4f4f4"></div>
<div class="a" style="left:55px;top:414.81px;width:1px;height:16.47px;background:#e2e2e2"></div>
<div class="a" style="left:472px;top:414.81px;width:1px;height:16.47px;background:#e2e2e2"></div>
<div class="a" style="left:535px;top:414.81px;width:1px;height:16.47px;background:#e2e2e2"></div>
<div class="a" style="left:597px;top:414.81px;width:1px;height:16.47px;background:#e2e2e2"></div>
<div class="a" style="left:660px;top:414.81px;width:1px;height:16.47px;background:#e2e2e2"></div>
<div class="a" style="left:722px;top:414.81px;width:1px;height:16.47px;background:#e2e2e2"></div>
<div class="a" style="left:785px;top:414.81px;width:1px;height:16.47px;background:#e2e2e2"></div>
<div class="a" style="left:848px;top:414.81px;width:1px;height:16.47px;background:#e2e2e2"></div>
<div class="a" style="left:1px;top:431.28px;width:54px;height:16.47px;background:#f4f4f4"></div>
<div class="a" style="left:56px;top:431.28px;width:416px;height:16.47px;background:#f4f4f4"></div>
<div class="a" style="left:473px;top:431.28px;width:62px;height:16.47px;background:#fdf5e6"></div>
<div class="a" style="left:536px;top:431.28px;width:61px;height:16.47px;background:#fdf5e6"></div>
<div class="a" style="left:598px;top:431.28px;width:62px;height:16.47px;background:#ffe4e1"></div>
<div class="a" style="left:661px;top:431.28px;width:61px;height:16.47px;background:#fdf5e6"></div>
<div class="a" style="left:723px;top:431.28px;width:62px;height:16.47px;background:#fdf5e6"></div>
<div class="a" style="left:786px;top:431.28px;width:62px;height:16.47px;background:#ffe4e1"></div>
<div class="a" style="left:849px;top:431.28px;width:2px;height:16.47px;background:#f4f4f4"></div>
<div class="a" style="left:55px;top:431.28px;width:1px;height:16.47px;background:#e2e2e2"></div>
<div class="a" style="left:472px;top:431.28px;width:1px;height:16.47px;background:#e2e2e2"></div>
<div class="a" style="left:535px;top:431.28px;width:1px;height:16.47px;background:#e2e2e2"></div>
<div class="a" style="left:597px;top:431.28px;width:1px;height:16.47px;background:#e2e2e2"></div>
<div class="a" style="left:660px;top:431.28px;width:1px;height:16.47px;background:#e2e2e2"></div>
<div class="a" style="left:722px;top:431.28px;width:1px;height:16.47px;background:#e2e2e2"></div>
<div class="a" style="left:785px;top:431.28px;width:1px;height:16.47px;background:#e2e2e2"></div>
<div class="a" style="left:848px;top:431.28px;width:1px;height:16.47px;background:#e2e2e2"></div>
<div class="a" style="left:1px;top:447.75px;width:54px;height:16.47px;background:#f4f4f4"></div>
<div class="a" style="left:56px;top:447.75px;width:416px;height:16.47px;background:#f4f4f4"></div>
<div class="a" style="left:473px;top:447.75px;width:62px;height:16.47px;background:#fdf5e6"></div>
<div class="a" style="left:536px;top:447.75px;width:61px;height:16.47px;background:#fdf5e6"></div>
<div class="a" style="left:598px;top:447.75px;width:62px;height:16.47px;background:#ffe4e1"></div>
<div class="a" style="left:661px;top:447.75px;width:61px;height:16.47px;background:#fdf5e6"></div>
<div class="a" style="left:723px;top:447.75px;width:62px;height:16.47px;background:#fdf5e6"></div>
<div class="a" style="left:786px;top:447.75px;width:62px;height:16.47px;background:#ffe4e1"></div>
<div class="a" style="left:849px;top:447.75px;width:2px;height:16.47px;background:#f4f4f4"></div>
<div class="a" style="left:55px;top:447.75px;width:1px;height:16.47px;background:#e2e2e2"></div>
<div class="a" style="left:472px;top:447.75px;width:1px;height:16.47px;background:#e2e2e2"></div>
<div class="a" style="left:535px;top:447.75px;width:1px;height:16.47px;background:#e2e2e2"></div>
<div class="a" style="left:597px;top:447.75px;width:1px;height:16.47px;background:#e2e2e2"></div>
<div class="a" style="left:660px;top:447.75px;width:1px;height:16.47px;background:#e2e2e2"></div>
<div class="a" style="left:722px;top:447.75px;width:1px;height:16.47px;background:#e2e2e2"></div>
<div class="a" style="left:785px;top:447.75px;width:1px;height:16.47px;background:#e2e2e2"></div>
<div class="a" style="left:848px;top:447.75px;width:1px;height:16.47px;background:#e2e2e2"></div>
<div class="a" style="left:1px;top:464.22px;width:54px;height:16.47px;background:#f4f4f4"></div>
<div class="a" style="left:56px;top:464.22px;width:416px;height:16.47px;background:#f4f4f4"></div>
<div class="a" style="left:473px;top:464.22px;width:62px;height:16.47px;background:#fdf5e6"></div>
<div class="a" style="left:536px;top:464.22px;width:61px;height:16.47px;background:#fdf5e6"></div>
<div class="a" style="left:598px;top:464.22px;width:62px;height:16.47px;background:#ffe4e1"></div>
<div class="a" style="left:661px;top:464.22px;width:61px;height:16.47px;background:#fdf5e6"></div>
<div class="a" style="left:723px;top:464.22px;width:62px;height:16.47px;background:#fdf5e6"></div>
<div class="a" style="left:786px;top:464.22px;width:62px;height:16.47px;background:#ffe4e1"></div>
<div class="a" style="left:849px;top:464.22px;width:2px;height:16.47px;background:#f4f4f4"></div>
<div class="a" style="left:55px;top:464.22px;width:1px;height:16.47px;background:#e2e2e2"></div>
<div class="a" style="left:472px;top:464.22px;width:1px;height:16.47px;background:#e2e2e2"></div>
<div class="a" style="left:535px;top:464.22px;width:1px;height:16.47px;background:#e2e2e2"></div>
<div class="a" style="left:597px;top:464.22px;width:1px;height:16.47px;background:#e2e2e2"></div>
<div class="a" style="left:660px;top:464.22px;width:1px;height:16.47px;background:#e2e2e2"></div>
<div class="a" style="left:722px;top:464.22px;width:1px;height:16.47px;background:#e2e2e2"></div>
<div class="a" style="left:785px;top:464.22px;width:1px;height:16.47px;background:#e2e2e2"></div>
<div class="a" style="left:848px;top:464.22px;width:1px;height:16.47px;background:#e2e2e2"></div>
<div class="a" style="left:1px;top:480.69px;width:54px;height:16.47px;background:#f4f4f4"></div>
<div class="a" style="left:56px;top:480.69px;width:416px;height:16.47px;background:#f4f4f4"></div>
<div class="a" style="left:473px;top:480.69px;width:62px;height:16.47px;background:#fdf5e6"></div>
<div class="a" style="left:536px;top:480.69px;width:61px;height:16.47px;background:#fdf5e6"></div>
<div class="a" style="left:598px;top:480.69px;width:62px;height:16.47px;background:#ffe4e1"></div>
<div class="a" style="left:661px;top:480.69px;width:61px;height:16.47px;background:#fdf5e6"></div>
<div class="a" style="left:723px;top:480.69px;width:62px;height:16.47px;background:#fdf5e6"></div>
<div class="a" style="left:786px;top:480.69px;width:62px;height:16.47px;background:#ffe4e1"></div>
<div class="a" style="left:849px;top:480.69px;width:2px;height:16.47px;background:#f4f4f4"></div>
<div class="a" style="left:55px;top:480.69px;width:1px;height:16.47px;background:#e2e2e2"></div>
<div class="a" style="left:472px;top:480.69px;width:1px;height:16.47px;background:#e2e2e2"></div>
<div class="a" style="left:535px;top:480.69px;width:1px;height:16.47px;background:#e2e2e2"></div>
<div class="a" style="left:597px;top:480.69px;width:1px;height:16.47px;background:#e2e2e2"></div>
<div class="a" style="left:660px;top:480.69px;width:1px;height:16.47px;background:#e2e2e2"></div>
<div class="a" style="left:722px;top:480.69px;width:1px;height:16.47px;background:#e2e2e2"></div>
<div class="a" style="left:785px;top:480.69px;width:1px;height:16.47px;background:#e2e2e2"></div>
<div class="a" style="left:848px;top:480.69px;width:1px;height:16.47px;background:#e2e2e2"></div>
<div class="a" style="left:1px;top:497.16px;width:54px;height:16.47px;background:#f4f4f4"></div>
<div class="a" style="left:56px;top:497.16px;width:416px;height:16.47px;background:#f4f4f4"></div>
<div class="a" style="left:473px;top:497.16px;width:62px;height:16.47px;background:#fdf5e6"></div>
<div class="a" style="left:536px;top:497.16px;width:61px;height:16.47px;background:#fdf5e6"></div>
<div class="a" style="left:598px;top:497.16px;width:62px;height:16.47px;background:#ffe4e1"></div>
<div class="a" style="left:661px;top:497.16px;width:61px;height:16.47px;background:#fdf5e6"></div>
<div class="a" style="left:723px;top:497.16px;width:62px;height:16.47px;background:#fdf5e6"></div>
<div class="a" style="left:786px;top:497.16px;width:62px;height:16.47px;background:#ffe4e1"></div>
<div class="a" style="left:849px;top:497.16px;width:2px;height:16.47px;background:#f4f4f4"></div>
<div class="a" style="left:55px;top:497.16px;width:1px;height:16.47px;background:#e2e2e2"></div>
<div class="a" style="left:472px;top:497.16px;width:1px;height:16.47px;background:#e2e2e2"></div>
<div class="a" style="left:535px;top:497.16px;width:1px;height:16.47px;background:#e2e2e2"></div>
<div class="a" style="left:597px;top:497.16px;width:1px;height:16.47px;background:#e2e2e2"></div>
<div class="a" style="left:660px;top:497.16px;width:1px;height:16.47px;background:#e2e2e2"></div>
<div class="a" style="left:722px;top:497.16px;width:1px;height:16.47px;background:#e2e2e2"></div>
<div class="a" style="left:785px;top:497.16px;width:1px;height:16.47px;background:#e2e2e2"></div>
<div class="a" style="left:848px;top:497.16px;width:1px;height:16.47px;background:#e2e2e2"></div>
<div class="a" style="left:1px;top:513.63px;width:54px;height:16.47px;background:#f4f4f4"></div>
<div class="a" style="left:56px;top:513.63px;width:416px;height:16.47px;background:#f4f4f4"></div>
<div class="a" style="left:473px;top:513.63px;width:62px;height:16.47px;background:#fdf5e6"></div>
<div class="a" style="left:536px;top:513.63px;width:61px;height:16.47px;background:#fdf5e6"></div>
<div class="a" style="left:598px;top:513.63px;width:62px;height:16.47px;background:#ffe4e1"></div>
<div class="a" style="left:661px;top:513.63px;width:61px;height:16.47px;background:#fdf5e6"></div>
<div class="a" style="left:723px;top:513.63px;width:62px;height:16.47px;background:#fdf5e6"></div>
<div class="a" style="left:786px;top:513.63px;width:62px;height:16.47px;background:#ffe4e1"></div>
<div class="a" style="left:849px;top:513.63px;width:2px;height:16.47px;background:#f4f4f4"></div>
<div class="a" style="left:55px;top:513.63px;width:1px;height:16.47px;background:#e2e2e2"></div>
<div class="a" style="left:472px;top:513.63px;width:1px;height:16.47px;background:#e2e2e2"></div>
<div class="a" style="left:535px;top:513.63px;width:1px;height:16.47px;background:#e2e2e2"></div>
<div class="a" style="left:597px;top:513.63px;width:1px;height:16.47px;background:#e2e2e2"></div>
<div class="a" style="left:660px;top:513.63px;width:1px;height:16.47px;background:#e2e2e2"></div>
<div class="a" style="left:722px;top:513.63px;width:1px;height:16.47px;background:#e2e2e2"></div>
<div class="a" style="left:785px;top:513.63px;width:1px;height:16.47px;background:#e2e2e2"></div>
<div class="a" style="left:848px;top:513.63px;width:1px;height:16.47px;background:#e2e2e2"></div>
<div class="a" style="left:1px;top:530.10px;width:54px;height:16.47px;background:#f4f4f4"></div>
<div class="a" style="left:56px;top:530.10px;width:416px;height:16.47px;background:#f4f4f4"></div>
<div class="a" style="left:473px;top:530.10px;width:62px;height:16.47px;background:#fdf5e6"></div>
<div class="a" style="left:536px;top:530.10px;width:61px;height:16.47px;background:#fdf5e6"></div>
<div class="a" style="left:598px;top:530.10px;width:62px;height:16.47px;background:#ffe4e1"></div>
<div class="a" style="left:661px;top:530.10px;width:61px;height:16.47px;background:#fdf5e6"></div>
<div class="a" style="left:723px;top:530.10px;width:62px;height:16.47px;background:#fdf5e6"></div>
<div class="a" style="left:786px;top:530.10px;width:62px;height:16.47px;background:#ffe4e1"></div>
<div class="a" style="left:849px;top:530.10px;width:2px;height:16.47px;background:#f4f4f4"></div>
<div class="a" style="left:55px;top:530.10px;width:1px;height:16.47px;background:#e2e2e2"></div>
<div class="a" style="left:472px;top:530.10px;width:1px;height:16.47px;background:#e2e2e2"></div>
<div class="a" style="left:535px;top:530.10px;width:1px;height:16.47px;background:#e2e2e2"></div>
<div class="a" style="left:597px;top:530.10px;width:1px;height:16.47px;background:#e2e2e2"></div>
<div class="a" style="left:660px;top:530.10px;width:1px;height:16.47px;background:#e2e2e2"></div>
<div class="a" style="left:722px;top:530.10px;width:1px;height:16.47px;background:#e2e2e2"></div>
<div class="a" style="left:785px;top:530.10px;width:1px;height:16.47px;background:#e2e2e2"></div>
<div class="a" style="left:848px;top:530.10px;width:1px;height:16.47px;background:#e2e2e2"></div>
<div class="a" style="left:1px;top:546.57px;width:54px;height:16.47px;background:#f4f4f4"></div>
<div class="a" style="left:56px;top:546.57px;width:416px;height:16.47px;background:#f4f4f4"></div>
<div class="a" style="left:473px;top:546.57px;width:62px;height:16.47px;background:#fdf5e6"></div>
<div class="a" style="left:536px;top:546.57px;width:61px;height:16.47px;background:#fdf5e6"></div>
<div class="a" style="left:598px;top:546.57px;width:62px;height:16.47px;background:#ffe4e1"></div>
<div class="a" style="left:661px;top:546.57px;width:61px;height:16.47px;background:#fdf5e6"></div>
<div class="a" style="left:723px;top:546.57px;width:62px;height:16.47px;background:#fdf5e6"></div>
<div class="a" style="left:786px;top:546.57px;width:62px;height:16.47px;background:#ffe4e1"></div>
<div class="a" style="left:849px;top:546.57px;width:2px;height:16.47px;background:#f4f4f4"></div>
<div class="a" style="left:55px;top:546.57px;width:1px;height:16.47px;background:#e2e2e2"></div>
<div class="a" style="left:472px;top:546.57px;width:1px;height:16.47px;background:#e2e2e2"></div>
<div class="a" style="left:535px;top:546.57px;width:1px;height:16.47px;background:#e2e2e2"></div>
<div class="a" style="left:597px;top:546.57px;width:1px;height:16.47px;background:#e2e2e2"></div>
<div class="a" style="left:660px;top:546.57px;width:1px;height:16.47px;background:#e2e2e2"></div>
<div class="a" style="left:722px;top:546.57px;width:1px;height:16.47px;background:#e2e2e2"></div>
<div class="a" style="left:785px;top:546.57px;width:1px;height:16.47px;background:#e2e2e2"></div>
<div class="a" style="left:848px;top:546.57px;width:1px;height:16.47px;background:#e2e2e2"></div>
<div class="a" style="left:1px;top:563.04px;width:54px;height:16.47px;background:#f4f4f4"></div>
<div class="a" style="left:56px;top:563.04px;width:416px;height:16.47px;background:#f4f4f4"></div>
<div class="a" style="left:473px;top:563.04px;width:62px;height:16.47px;background:#fdf5e6"></div>
<div class="a" style="left:536px;top:563.04px;width:61px;height:16.47px;background:#fdf5e6"></div>
<div class="a" style="left:598px;top:563.04px;width:62px;height:16.47px;background:#ffe4e1"></div>
<div class="a" style="left:661px;top:563.04px;width:61px;height:16.47px;background:#fdf5e6"></div>
<div class="a" style="left:723px;top:563.04px;width:62px;height:16.47px;background:#fdf5e6"></div>
<div class="a" style="left:786px;top:563.04px;width:62px;height:16.47px;background:#ffe4e1"></div>
<div class="a" style="left:849px;top:563.04px;width:2px;height:16.47px;background:#f4f4f4"></div>
<div class="a" style="left:55px;top:563.04px;width:1px;height:16.47px;background:#e2e2e2"></div>
<div class="a" style="left:472px;top:563.04px;width:1px;height:16.47px;background:#e2e2e2"></div>
<div class="a" style="left:535px;top:563.04px;width:1px;height:16.47px;background:#e2e2e2"></div>
<div class="a" style="left:597px;top:563.04px;width:1px;height:16.47px;background:#e2e2e2"></div>
<div class="a" style="left:660px;top:563.04px;width:1px;height:16.47px;background:#e2e2e2"></div>
<div class="a" style="left:722px;top:563.04px;width:1px;height:16.47px;background:#e2e2e2"></div>
<div class="a" style="left:785px;top:563.04px;width:1px;height:16.47px;background:#e2e2e2"></div>
<div class="a" style="left:848px;top:563.04px;width:1px;height:16.47px;background:#e2e2e2"></div>
<div class="a" style="left:1px;top:579.51px;width:54px;height:16.47px;background:#f4f4f4"></div>
<div class="a" style="left:56px;top:579.51px;width:416px;height:16.47px;background:#f4f4f4"></div>
<div class="a" style="left:473px;top:579.51px;width:62px;height:16.47px;background:#fdf5e6"></div>
<div class="a" style="left:536px;top:579.51px;width:61px;height:16.47px;background:#fdf5e6"></div>
<div class="a" style="left:598px;top:579.51px;width:62px;height:16.47px;background:#ffe4e1"></div>
<div class="a" style="left:661px;top:579.51px;width:61px;height:16.47px;background:#fdf5e6"></div>
<div class="a" style="left:723px;top:579.51px;width:62px;height:16.47px;background:#fdf5e6"></div>
<div class="a" style="left:786px;top:579.51px;width:62px;height:16.47px;background:#ffe4e1"></div>
<div class="a" style="left:849px;top:579.51px;width:2px;height:16.47px;background:#f4f4f4"></div>
<div class="a" style="left:55px;top:579.51px;width:1px;height:16.47px;background:#e2e2e2"></div>
<div class="a" style="left:472px;top:579.51px;width:1px;height:16.47px;background:#e2e2e2"></div>
<div class="a" style="left:535px;top:579.51px;width:1px;height:16.47px;background:#e2e2e2"></div>
<div class="a" style="left:597px;top:579.51px;width:1px;height:16.47px;background:#e2e2e2"></div>
<div class="a" style="left:660px;top:579.51px;width:1px;height:16.47px;background:#e2e2e2"></div>
<div class="a" style="left:722px;top:579.51px;width:1px;height:16.47px;background:#e2e2e2"></div>
<div class="a" style="left:785px;top:579.51px;width:1px;height:16.47px;background:#e2e2e2"></div>
<div class="a" style="left:848px;top:579.51px;width:1px;height:16.47px;background:#e2e2e2"></div>
<div class="a" style="left:1px;top:595.98px;width:54px;height:16.47px;background:#f4f4f4"></div>
<div class="a" style="left:56px;top:595.98px;width:416px;height:16.47px;background:#f4f4f4"></div>
<div class="a" style="left:473px;top:595.98px;width:62px;height:16.47px;background:#fdf5e6"></div>
<div class="a" style="left:536px;top:595.98px;width:61px;height:16.47px;background:#fdf5e6"></div>
<div class="a" style="left:598px;top:595.98px;width:62px;height:16.47px;background:#ffe4e1"></div>
<div class="a" style="left:661px;top:595.98px;width:61px;height:16.47px;background:#fdf5e6"></div>
<div class="a" style="left:723px;top:595.98px;width:62px;height:16.47px;background:#fdf5e6"></div>
<div class="a" style="left:786px;top:595.98px;width:62px;height:16.47px;background:#ffe4e1"></div>
<div class="a" style="left:849px;top:595.98px;width:2px;height:16.47px;background:#f4f4f4"></div>
<div class="a" style="left:55px;top:595.98px;width:1px;height:16.47px;background:#e2e2e2"></div>
<div class="a" style="left:472px;top:595.98px;width:1px;height:16.47px;background:#e2e2e2"></div>
<div class="a" style="left:535px;top:595.98px;width:1px;height:16.47px;background:#e2e2e2"></div>
<div class="a" style="left:597px;top:595.98px;width:1px;height:16.47px;background:#e2e2e2"></div>
<div class="a" style="left:660px;top:595.98px;width:1px;height:16.47px;background:#e2e2e2"></div>
<div class="a" style="left:722px;top:595.98px;width:1px;height:16.47px;background:#e2e2e2"></div>
<div class="a" style="left:785px;top:595.98px;width:1px;height:16.47px;background:#e2e2e2"></div>
<div class="a" style="left:848px;top:595.98px;width:1px;height:16.47px;background:#e2e2e2"></div>
<div class="t" style="left:58.60px;top:40.00px;transform:scaleX(0.8835)">Salaire de base</div>
<div class="n" style="right:320.20px;top:40.00px;transform:scaleX(0.9344)">151.67</div>
<div class="n" style="right:257.50px;top:40.00px;transform:scaleX(0.9306)">21.5905</div>
<div class="n" style="right:194.70px;top:40.00px;transform:scaleX(0.9291)">3 274.63</div>
<div class="t" style="left:58.60px;top:56.47px;transform:scaleX(0.8759)">Heures mensuelles majorées 25%</div>
<div class="n" style="right:320.20px;top:56.47px;transform:scaleX(0.9400)">17.33</div>
<div class="n" style="right:257.50px;top:56.47px;transform:scaleX(0.9306)">26.9881</div>
<div class="n" style="right:194.70px;top:56.47px;transform:scaleX(0.9344)">467.70</div>
<div class="t" style="left:58.60px;top:72.94px;transform:scaleX(0.8943)">Sous total Salaire de base</div>
<div class="n" style="right:320.20px;top:72.94px;transform:scaleX(0.9344)">169.00</div>
<div class="n" style="right:194.70px;top:72.94px;transform:scaleX(0.9291)">3 742.33</div>
<div class="t gt" style="left:58.60px;top:89.41px;transform:scaleX(0.9519)">Journée de solidarité : 29/05/2023</div>
<div class="t" style="left:58.60px;top:122.35px;transform:scaleX(0.8813)">Absence maladie 010523-100523</div>
<div class="n" style="right:320.20px;top:122.35px;transform:scaleX(0.9340)">- 56.00</div>
<div class="n" style="right:257.50px;top:122.35px;transform:scaleX(0.9306)">21.5905</div>
<div class="n" style="right:194.70px;top:122.35px;transform:scaleX(0.9265)">- 1 209.07</div>
<div class="t" style="left:58.60px;top:138.82px;transform:scaleX(0.9021)">Absence maladie, heures majorées</div>
<div class="n" style="right:320.20px;top:138.82px;transform:scaleX(0.9394)">- 6.40</div>
<div class="n" style="right:257.50px;top:138.82px;transform:scaleX(0.9306)">26.9881</div>
<div class="n" style="right:194.70px;top:138.82px;transform:scaleX(0.9303)">- 172.72</div>
<div class="t" style="left:58.60px;top:155.29px;transform:scaleX(0.9089)">Indemnité congés payés</div>
<div class="n" style="right:320.20px;top:155.29px;transform:scaleX(0.9400)">15.46</div>
<div class="n" style="right:194.70px;top:155.29px;transform:scaleX(0.9400)">15.46</div>
<div class="t gt" style="left:4.10px;top:171.76px;transform:scaleX(0.8938)">D02</div>
<div class="t gt" style="left:58.60px;top:171.76px;transform:scaleX(0.9181)">Jours de congés ancienneté acquis</div>
<div class="n gt" style="right:320.20px;top:171.76px;transform:scaleX(0.9490)">3.00</div>
<div class="t" style="left:58.60px;top:188.23px;transform:scaleX(0.8857)">Maintien absence maladie 66.67%</div>
<div class="n" style="right:320.20px;top:188.23px;transform:scaleX(0.9400)">67.19</div>
<div class="n" style="right:194.70px;top:188.23px;transform:scaleX(0.9400)">67.19</div>
<div class="t" style="left:58.60px;top:204.70px;transform:scaleX(0.9181)">Salaire brut</div>
<div class="n" style="right:194.70px;top:204.70px;transform:scaleX(0.9291)">2 443.19</div>
<div class="t" style="left:4.10px;top:221.17px;transform:scaleX(0.7563)">SS001</div>
<div class="t" style="left:58.60px;top:221.17px;transform:scaleX(0.9419)">Maladie - maternité - invalidité - décès</div>
<div class="n" style="right:320.20px;top:221.17px;transform:scaleX(0.9291)">2 443.19</div>
<div class="n" style="right:131.80px;top:221.17px;transform:scaleX(0.9291)">2 443.19</div>
<div class="n" style="right:69.30px;top:221.17px;transform:scaleX(0.9344)">7.0000</div>
<div class="n" style="right:6.40px;top:221.17px;transform:scaleX(0.9344)">171.02</div>
<div class="t" style="left:4.10px;top:237.64px;transform:scaleX(0.7905)">SS002</div>
<div class="t" style="left:58.60px;top:237.64px;transform:scaleX(0.9395)">Contribution Solidarité Autonomie</div>
<div class="n" style="right:320.20px;top:237.64px;transform:scaleX(0.9291)">2 443.19</div>
<div class="n" style="right:131.80px;top:237.64px;transform:scaleX(0.9291)">2 443.19</div>
<div class="n" style="right:69.30px;top:237.64px;transform:scaleX(0.9344)">0.3000</div>
<div class="n" style="right:6.40px;top:237.64px;transform:scaleX(0.9490)">7.33</div>
<div class="t" style="left:4.10px;top:254.11px;transform:scaleX(0.7905)">SS003</div>
<div class="t" style="left:58.60px;top:254.11px;transform:scaleX(0.8940)">Vieillesse déplafonnée</div>
<div class="n" style="right:320.20px;top:254.11px;transform:scaleX(0.9291)">2 443.19</div>
<div class="n" style="right:257.50px;top:254.11px;transform:scaleX(0.9344)">0.4000</div>
<div class="n" style="right:194.70px;top:254.11px;transform:scaleX(0.9490)">9.77</div>
<div class="n" style="right:131.80px;top:254.11px;transform:scaleX(0.9291)">2 443.19</div>
<div class="n" style="right:69.30px;top:254.11px;transform:scaleX(0.9344)">1.9000</div>
<div class="n" style="right:6.40px;top:254.11px;transform:scaleX(0.9400)">46.42</div>
<div class="t" style="left:4.10px;top:270.58px;transform:scaleX(0.7905)">SS004</div>
<div class="t" style="left:58.60px;top:270.58px;transform:scaleX(0.8923)">Vieillesse plafonnée</div>
<div class="n" style="right:320.20px;top:270.58px;transform:scaleX(0.9291)">2 838.19</div>
<div class="n" style="right:257.50px;top:270.58px;transform:scaleX(0.9344)">6.9000</div>
<div class="n" style="right:194.70px;top:270.58px;transform:scaleX(0.9344)">195.84</div>
<div class="n" style="right:131.80px;top:270.58px;transform:scaleX(0.9291)">2 838.19</div>
<div class="n" style="right:69.30px;top:270.58px;transform:scaleX(0.9344)">8.5500</div>
<div class="n" style="right:6.40px;top:270.58px;transform:scaleX(0.9344)">242.67</div>
<div class="t" style="left:4.10px;top:287.05px;transform:scaleX(0.7905)">SS005</div>
<div class="t" style="left:58.60px;top:287.05px;transform:scaleX(0.9008)">Allocations familiales</div>
<div class="n" style="right:320.20px;top:287.05px;transform:scaleX(0.9291)">2 443.19</div>
<div class="n" style="right:131.80px;top:287.05px;transform:scaleX(0.9291)">2 443.19</div>
<div class="n" style="right:69.30px;top:287.05px;transform:scaleX(0.9344)">3.4500</div>
<div class="n" style="right:6.40px;top:287.05px;transform:scaleX(0.9400)">84.29</div>
<div class="t" style="left:4.10px;top:303.52px;transform:scaleX(0.7905)">SS006</div>
<div class="t" style="left:58.60px;top:303.52px;transform:scaleX(0.9677)">Accident du travail</div>
<div class="n" style="right:320.20px;top:303.52px;transform:scaleX(0.9291)">2 443.19</div>
<div class="n" style="right:131.80px;top:303.52px;transform:scaleX(0.9291)">2 443.19</div>
<div class="n" style="right:69.30px;top:303.52px;transform:scaleX(0.9344)">0.7500</div>
<div class="n" style="right:6.40px;top:303.52px;transform:scaleX(0.9400)">18.32</div>
<div class="t" style="left:4.10px;top:319.99px;transform:scaleX(0.7905)">SS008</div>
<div class="t" style="left:58.60px;top:319.99px;transform:scaleX(0.8791)">FNAL déplafonné</div>
<div class="n" style="right:320.20px;top:319.99px;transform:scaleX(0.9291)">2 443.19</div>
<div class="n" style="right:131.80px;top:319.99px;transform:scaleX(0.9291)">2 443.19</div>
<div class="n" style="right:69.30px;top:319.99px;transform:scaleX(0.9344)">0.5000</div>
<div class="n" style="right:6.40px;top:319.99px;transform:scaleX(0.9400)">12.22</div>
<div class="t" style="left:4.10px;top:336.46px;transform:scaleX(0.7905)">SS009</div>
<div class="t" style="left:58.60px;top:336.46px;transform:scaleX(0.9233)">Versement mobilités</div>
<div class="n" style="right:320.20px;top:336.46px;transform:scaleX(0.9291)">2 443.19</div>
<div class="n" style="right:131.80px;top:336.46px;transform:scaleX(0.9291)">2 443.19</div>
<div class="n" style="right:69.30px;top:336.46px;transform:scaleX(0.9344)">2.0000</div>
<div class="n" style="right:6.40px;top:336.46px;transform:scaleX(0.9400)">48.86</div>
<div class="t" style="left:4.10px;top:352.93px;transform:scaleX(0.7905)">SS010</div>
<div class="t" style="left:58.60px;top:352.93px;transform:scaleX(0.9560)">Forfait social sur contributions de prévoyance</div>
<div class="n" style="right:320.20px;top:352.93px;transform:scaleX(0.9344)">132.51</div>
<div class="n" style="right:131.80px;top:352.93px;transform:scaleX(0.9344)">132.51</div>
<div class="n" style="right:69.30px;top:352.93px;transform:scaleX(0.9344)">8.0000</div>
<div class="n" style="right:6.40px;top:352.93px;transform:scaleX(0.9400)">10.60</div>
<div class="t" style="left:4.10px;top:369.40px;transform:scaleX(0.7764)">SS021</div>
<div class="t" style="left:58.60px;top:369.40px;transform:scaleX(0.8766)">CSG déductible</div>
<div class="n" style="right:320.20px;top:369.40px;transform:scaleX(0.9291)">2 532.94</div>
<div class="n" style="right:257.50px;top:369.40px;transform:scaleX(0.9344)">6.8000</div>
<div class="n" style="right:194.70px;top:369.40px;transform:scaleX(0.9344)">172.24</div>
<div class="n" style="right:131.80px;top:369.40px;transform:scaleX(0.9291)">2 532.94</div>
<div class="t" style="left:4.10px;top:385.87px;transform:scaleX(0.7905)">SS022</div>
<div class="t" style="left:58.60px;top:385.87px;transform:scaleX(0.8615)">CSG non déductible et CRDS</div>
<div class="n" style="right:320.20px;top:385.87px;transform:scaleX(0.9291)">2 532.94</div>
<div class="n" style="right:257.50px;top:385.87px;transform:scaleX(0.9344)">2.9000</div>
<div class="n" style="right:194.70px;top:385.87px;transform:scaleX(0.9400)">73.46</div>
<div class="n" style="right:131.80px;top:385.87px;transform:scaleX(0.9291)">2 532.94</div>
<div class="t" style="left:4.10px;top:402.34px;transform:scaleX(0.8372)">CH001</div>
<div class="t" style="left:58.60px;top:402.34px;transform:scaleX(0.8804)">Assurance chômage TrA+TrB</div>
<div class="n" style="right:320.20px;top:402.34px;transform:scaleX(0.9291)">2 443.19</div>
<div class="n" style="right:131.80px;top:402.34px;transform:scaleX(0.9291)">2 443.19</div>
<div class="n" style="right:69.30px;top:402.34px;transform:scaleX(0.9344)">4.0500</div>
<div class="n" style="right:6.40px;top:402.34px;transform:scaleX(0.9400)">98.95</div>
<div class="t" style="left:4.10px;top:418.81px;transform:scaleX(0.8604)">CH002</div>
<div class="t" style="left:58.60px;top:418.81px;transform:scaleX(0.7434)">AGS</div>
<div class="n" style="right:320.20px;top:418.81px;transform:scaleX(0.9291)">2 443.19</div>
<div class="n" style="right:131.80px;top:418.81px;transform:scaleX(0.9291)">2 443.19</div>
<div class="n" style="right:69.30px;top:418.81px;transform:scaleX(0.9344)">0.1500</div>
<div class="n" style="right:6.40px;top:418.81px;transform:scaleX(0.9490)">3.66</div>
<div class="t" style="left:4.10px;top:435.28px;transform:scaleX(0.8281)">AA201</div>
<div class="t" style="left:58.60px;top:435.28px;transform:scaleX(0.9370)">Retraite TU1</div>
<div class="n" style="right:320.20px;top:435.28px;transform:scaleX(0.9291)">2 838.19</div>
<div class="n" style="right:257.50px;top:435.28px;transform:scaleX(0.9344)">3.1500</div>
<div class="n" style="right:194.70px;top:435.28px;transform:scaleX(0.9400)">89.40</div>
<div class="n" style="right:131.80px;top:435.28px;transform:scaleX(0.9291)">2 838.19</div>
<div class="n" style="right:69.30px;top:435.28px;transform:scaleX(0.9344)">4.7200</div>
<div class="n" style="right:6.40px;top:435.28px;transform:scaleX(0.9344)">133.96</div>
<div class="t" style="left:4.10px;top:451.75px;transform:scaleX(0.8321)">AA202</div>
<div class="t" style="left:58.60px;top:451.75px;transform:scaleX(0.9442)">Retraite TU2</div>
<div class="n" style="right:320.20px;top:451.75px;transform:scaleX(0.9303)">- 395.00</div>
<div class="n" style="right:257.50px;top:451.75px;transform:scaleX(0.9344)">8.6400</div>
<div class="n" style="right:194.70px;top:451.75px;transform:scaleX(0.9340)">- 34.13</div>
<div class="n" style="right:131.80px;top:451.75px;transform:scaleX(0.9303)">- 395.00</div>
<div class="n" style="right:69.30px;top:451.75px;transform:scaleX(0.9306)">12.9500</div>
<div class="n" style="right:6.40px;top:451.75px;transform:scaleX(0.9340)">- 51.15</div>
<div class="t" style="left:4.10px;top:468.22px;transform:scaleX(0.8006)">AA211</div>
<div class="t" style="left:58.60px;top:468.22px;transform:scaleX(0.9128)">Contribution d'Equilibre Général TU1</div>
<div class="n" style="right:320.20px;top:468.22px;transform:scaleX(0.9291)">2 838.19</div>
<div class="n" style="right:257.50px;top:468.22px;transform:scaleX(0.9344)">0.8600</div>
<div class="n" style="right:194.70px;top:468.22px;transform:scaleX(0.9400)">24.41</div>
<div class="n" style="right:131.80px;top:468.22px;transform:scaleX(0.9291)">2 838.19</div>
<div class="n" style="right:69.30px;top:468.22px;transform:scaleX(0.9344)">1.2900</div>
<div class="n" style="right:6.40px;top:468.22px;transform:scaleX(0.9400)">36.61</div>
<div class="t" style="left:4.10px;top:484.69px;transform:scaleX(0.8321)">AA212</div>
<div class="t" style="left:58.60px;top:484.69px;transform:scaleX(0.9159)">Contribution d'Equilibre Général TU2</div>
<div class="n" style="right:320.20px;top:484.69px;transform:scaleX(0.9303)">- 395.00</div>
<div class="n" style="right:257.50px;top:484.69px;transform:scaleX(0.9344)">1.0800</div>
<div class="n" style="right:194.70px;top:484.69px;transform:scaleX(0.9394)">- 4.27</div>
<div class="n" style="right:131.80px;top:484.69px;transform:scaleX(0.9303)">- 395.00</div>
<div class="n" style="right:69.30px;top:484.69px;transform:scaleX(0.9344)">1.6200</div>
<div class="n" style="right:6.40px;top:484.69px;transform:scaleX(0.9394)">- 6.40</div>
<div class="t" style="left:4.10px;top:501.16px;transform:scaleX(0.8048)">AA221</div>
<div class="t" style="left:58.60px;top:501.16px;transform:scaleX(0.9200)">Contribution d'Equilibre Technique TU1</div>
<div class="n" style="right:320.20px;top:501.16px;transform:scaleX(0.9291)">2 838.19</div>
<div class="n" style="right:257.50px;top:501.16px;transform:scaleX(0.9344)">0.1400</div>
<div class="n" style="right:194.70px;top:501.16px;transform:scaleX(0.9490)">3.97</div>
<div class="n" style="right:131.80px;top:501.16px;transform:scaleX(0.9291)">2 838.19</div>
<div class="n" style="right:69.30px;top:501.16px;transform:scaleX(0.9344)">0.2100</div>
<div class="n" style="right:6.40px;top:501.16px;transform:scaleX(0.9490)">5.96</div>
<div class="t" style="left:4.10px;top:517.63px;transform:scaleX(0.8321)">AA222</div>
<div class="t" style="left:58.60px;top:517.63px;transform:scaleX(0.9229)">Contribution d'Equilibre Technique TU2</div>
<div class="n" style="right:320.20px;top:517.63px;transform:scaleX(0.9303)">- 395.00</div>
<div class="n" style="right:257.50px;top:517.63px;transform:scaleX(0.9344)">0.1400</div>
<div class="n" style="right:194.70px;top:517.63px;transform:scaleX(0.9394)">- 0.55</div>
<div class="n" style="right:131.80px;top:517.63px;transform:scaleX(0.9303)">- 395.00</div>
<div class="n" style="right:69.30px;top:517.63px;transform:scaleX(0.9344)">0.2100</div>
<div class="n" style="right:6.40px;top:517.63px;transform:scaleX(0.9394)">- 0.83</div>
<div class="t" style="left:4.10px;top:534.10px;transform:scaleX(0.8048)">AA031</div>
<div class="t" style="left:58.60px;top:534.10px;transform:scaleX(0.8090)">APEC TrA</div>
<div class="n" style="right:320.20px;top:534.10px;transform:scaleX(0.9291)">2 838.19</div>
<div class="n" style="right:257.50px;top:534.10px;transform:scaleX(0.9344)">0.0240</div>
<div class="n" style="right:194.70px;top:534.10px;transform:scaleX(0.9490)">0.68</div>
<div class="n" style="right:131.80px;top:534.10px;transform:scaleX(0.9291)">2 838.19</div>
<div class="n" style="right:69.30px;top:534.10px;transform:scaleX(0.9344)">0.0360</div>
<div class="n" style="right:6.40px;top:534.10px;transform:scaleX(0.9490)">1.02</div>
<div class="t" style="left:4.10px;top:550.57px;transform:scaleX(0.8321)">AA035</div>
<div class="t" style="left:58.60px;top:550.57px;transform:scaleX(0.8195)">APEC TrB</div>
<div class="n" style="right:320.20px;top:550.57px;transform:scaleX(0.9303)">- 395.00</div>
<div class="n" style="right:257.50px;top:550.57px;transform:scaleX(0.9344)">0.0240</div>
<div class="n" style="right:194.70px;top:550.57px;transform:scaleX(0.9394)">- 0.09</div>
<div class="n" style="right:131.80px;top:550.57px;transform:scaleX(0.9303)">- 395.00</div>
<div class="n" style="right:69.30px;top:550.57px;transform:scaleX(0.9344)">0.0360</div>
<div class="n" style="right:6.40px;top:550.57px;transform:scaleX(0.9394)">- 0.14</div>
<div class="t" style="left:4.10px;top:567.04px;transform:scaleX(0.7905)">SS050</div>
<div class="t" style="left:58.60px;top:567.04px;transform:scaleX(0.9348)">Contribution au dialogue social</div>
<div class="n" style="right:320.20px;top:567.04px;transform:scaleX(0.9291)">2 443.19</div>
<div class="n" style="right:131.80px;top:567.04px;transform:scaleX(0.9291)">2 443.19</div>
<div class="n" style="right:69.30px;top:567.04px;transform:scaleX(0.9344)">0.0160</div>
<div class="n" style="right:6.40px;top:567.04px;transform:scaleX(0.9490)">0.39</div>
<div class="t" style="left:4.10px;top:583.51px;transform:scaleX(0.8012)">SS014.1</div>
<div class="t" style="left:58.60px;top:583.51px;transform:scaleX(0.9576)">Déduction forfaitaire/heures supplémentaires</div>
<div class="n" style="right:131.80px;top:583.51px;transform:scaleX(0.9410)">11.24</div>
<div class="n" style="right:69.30px;top:583.51px;transform:scaleX(0.9303)">- 0.5000</div>
<div class="n" style="right:6.40px;top:583.51px;transform:scaleX(0.9394)">- 5.62</div>
<div class="t" style="left:4.10px;top:599.98px;transform:scaleX(0.8200)">SS013.2</div>
<div class="t" style="left:58.60px;top:599.98px;transform:scaleX(0.9402)">Exonération cotisation sur HC/HS</div>
<div class="n" style="right:320.20px;top:599.98px;transform:scaleX(0.9344)">304.08</div>
<div class="n" style="right:257.50px;top:599.98px;transform:scaleX(0.9279)">- 11.3100</div>
<div class="n" style="right:194.70px;top:599.98px;transform:scaleX(0.9340)">- 34.39</div>
<div class="ht" style="left:-31.50px;top:8.00px;width:120px;text-align:center;transform:scaleX(0.9088)">Code</div>
<div class="ht" style="left:-31.50px;top:21.10px;width:120px;text-align:center;transform:scaleX(0.8879)">libellé</div>
<div class="ht" style="left:204.20px;top:14.80px;width:120px;text-align:center;transform:scaleX(0.9068)">Libellé</div>
<div class="ht" style="left:443.50px;top:8.00px;width:120px;text-align:center;transform:scaleX(0.8638)">Base</div>
<div class="ht" style="left:443.20px;top:21.10px;width:120px;text-align:center;transform:scaleX(0.9602)">salariale</div>
<div class="ht" style="left:506.20px;top:8.00px;width:120px;text-align:center;transform:scaleX(0.9790)">Taux/montant</div>
<div class="ht" style="left:506.60px;top:21.10px;width:120px;text-align:center;transform:scaleX(0.9486)">salarial</div>
<div class="ht" style="left:568.80px;top:8.00px;width:120px;text-align:center;transform:scaleX(0.9390)">Résultat</div>
<div class="ht" style="left:569.20px;top:21.10px;width:120px;text-align:center;transform:scaleX(0.9583)">salarial</div>
<div class="ht" style="left:631.50px;top:8.00px;width:120px;text-align:center;transform:scaleX(0.8638)">Base</div>
<div class="ht" style="left:631.40px;top:21.10px;width:120px;text-align:center;transform:scaleX(0.9706)">patronale</div>
<div class="ht" style="left:694.00px;top:8.00px;width:120px;text-align:center;transform:scaleX(0.9790)">Taux/montant</div>
<div class="ht" style="left:693.80px;top:21.10px;width:120px;text-align:center;transform:scaleX(1.0045)">patronal</div>
<div class="ht" style="left:756.70px;top:8.00px;width:120px;text-align:center;transform:scaleX(0.9474)">Résultat</div>
<div class="ht" style="left:756.70px;top:21.10px;width:120px;text-align:center;transform:scaleX(1.0017)">patronal</div>
<div class="a" style="left:1px;top:596px;width:850px;height:1px;background:#6c8ce0"></div>
<div class="a" style="left:474.5px;top:597.5px;width:14px;height:11px;border-left:1px dotted #b0b0b0;border-top:1px dotted #b0b0b0"></div>
<div class="a" style="left:617px;top:51px;width:43px;height:19px;border:2px solid #ff0000;border-radius:1.5px;box-shadow:0 0 0.8px #ff0000, inset 0 0 0.8px #ff0000"></div>
<div class="a" style="left:1px;top:608px;width:850px;height:1px;background:rgba(255,255,255,0.55)"></div>
<div class="a" style="left:0;top:609px;width:852px;height:1px;background:#5a5a5a"></div>
<div class="a" style="left:1px;top:1px;width:850px;height:1px;background:#999"></div>
<div class="a" style="left:1px;top:1px;width:1px;height:609px;background:#999"></div>
<div class="a" style="left:2px;top:36px;width:2px;height:560px;background:rgba(255,255,255,0.45)"></div>
<div class="a" style="left:850px;top:1px;width:1px;height:609px;background:rgba(0,0,0,0.18)"></div>
<div class="a" style="left:489px;top:596px;width:47px;height:14px;border:2px solid #ff0000;border-radius:1.5px;box-shadow:0 0 0.8px #ff0000, inset 0 0 0.8px #ff0000"></div>
<div class="a" style="left:0;top:0;width:852px;height:1px;background:#000"></div>
<div class="a" style="left:0;top:0;width:1px;height:611px;background:#000"></div>
<div class="a" style="left:851px;top:0;width:1px;height:611px;background:#000"></div>
<div class="a" style="left:0;top:610px;width:852px;height:1px;background:#000"></div>
</body></html>
